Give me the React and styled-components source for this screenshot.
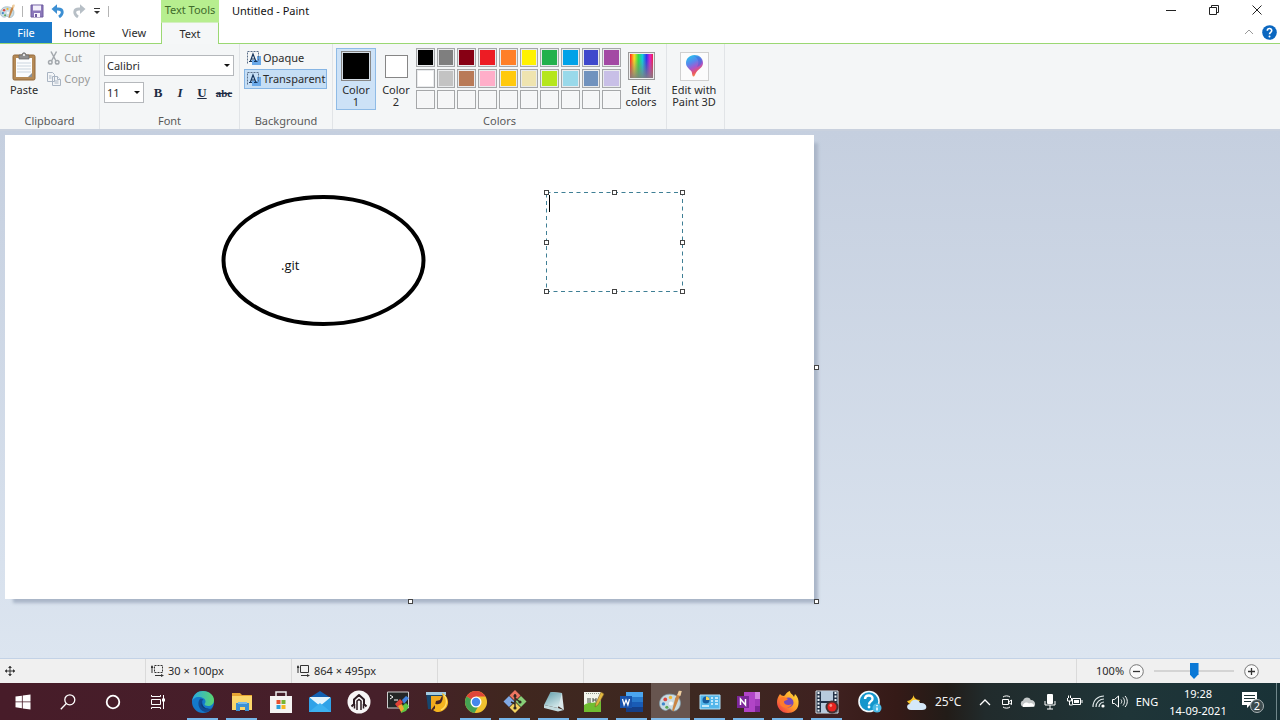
import React from "react";
import styled, { createGlobalStyle, css } from "styled-components";

const GlobalStyle = createGlobalStyle`
  *, *::before, *::after { box-sizing: border-box; }
  body {
    margin: 0;
    font-family: "Noto Sans", "Open Sans", sans-serif;
    font-size: 11px;
    line-height: 12px;
    color: #2b2b2b;
    background: #fff;
  }
  button, select, input, textarea { font: inherit; color: inherit; }
  svg { display: block; flex: none; }
`;

const Window = styled.div`
  display: flex;
  flex-direction: column;
  min-height: 100vh;
`;

const PlainButton = styled.button`
  display: flex;
  align-items: center;
  justify-content: center;
  padding: 0;
  border: 0;
  background: none;
`;

/* ---------- title bar and tabs ---------- */

const TitleBar = styled.header`
  display: flex;
  height: 22px;
  background: #fff;
`;

const QuickAccess = styled.div`
  display: flex;
  align-items: center;
  gap: 7px;
  width: 161px;
`;

const Divider = styled.span`
  width: 1px;
  height: 11px;
  background: #b4b4b4;
`;

const ContextTitle = styled.div`
  width: 58px;
  padding-top: 4px;
  text-align: center;
  white-space: nowrap;
  color: #3f6b2b;
  background: #b7ee8f;
`;

const Title = styled.h1`
  flex: 1;
  margin: 0;
  padding: 5px 0 0 13px;
  font-size: 11px;
  font-weight: 400;
  color: #111;
`;

const WindowButtons = styled.div`
  display: flex;
  padding-right: 2px;
`;

const WindowButton = styled(PlainButton)`
  width: 43px;
  height: 20px;
`;

const TabBar = styled.nav`
  display: flex;
  height: 22px;
  border-bottom: 1px solid #9bd873;
  background: #fff;
`;

const Tab = styled(PlainButton)`
  width: ${(p) => p.$width}px;
  height: 22px;
  ${(p) => p.$file && css`height: 21px; color: #fff; background: #1979ca;`}
  ${(p) => p.$active && css`
    border: 1px solid #9bd873;
    border-top-color: #d3efc0;
    border-bottom: 0;
    background: #f5f7f8;
  `}
`;

const TabTools = styled.div`
  display: flex;
  align-items: center;
  gap: 9px;
  margin-left: auto;
  padding-right: 3px;
`;

/* ---------- ribbon ---------- */

const Ribbon = styled.section`
  display: flex;
  height: 87px;
  border-bottom: 2px solid #c9d1de;
  background: #f4f6f7;
`;

const Group = styled.div`
  display: flex;
  flex-direction: column;
  width: ${(p) => p.$width}px;
  border-right: 1px solid #e1e4e7;
`;

const GroupBody = styled.div`
  display: flex;
  flex: 1;
  padding: ${(p) => p.$pad || "4px"};
`;

const GroupLabel = styled.div`
  height: 14px;
  text-align: center;
  color: #5a5a5a;
`;

const Column = styled.div`
  display: flex;
  flex-direction: column;
  gap: ${(p) => p.$gap}px;
`;

const Row = styled.div`
  display: flex;
  align-items: center;
  gap: 3px;
`;

const StyleButtons = styled.div`
  display: flex;
`;

const LargeButton = styled.button`
  display: flex;
  flex-direction: column;
  align-items: center;
  gap: 3px;
  width: ${(p) => p.$width || 40}px;
  height: 62px;
  padding: 2px 0 0;
  border: 1px solid ${(p) => (p.$pressed ? "#8fbbe6" : "transparent")};
  background: ${(p) => (p.$pressed ? "#cde2f7" : "none")};
  white-space: nowrap;
`;

const LargeIcon = styled.span`
  display: flex;
  align-items: center;
  justify-content: center;
  height: 30px;
`;

const SmallButton = styled.button`
  display: flex;
  align-items: center;
  gap: ${(p) => (p.$muted ? 3 : 1)}px;
  height: 20px;
  padding: 0 ${(p) => (p.$muted ? 3 : 1)}px;
  border: 1px solid ${(p) => (p.$pressed ? "#86b5e4" : "transparent")};
  background: ${(p) => (p.$pressed ? "#c5def5" : "none")};
  color: ${(p) => (p.$muted ? "#9a9a9a" : "#2b2b2b")};
`;

const SelectBox = styled.span`
  position: relative;
  display: block;
  width: ${(p) => p.$width}px;
  &::after {
    content: "";
    position: absolute;
    top: 9px;
    right: 4px;
    border: 3px solid transparent;
    border-top-color: #111;
    border-bottom: 0;
    pointer-events: none;
  }
`;

const Select = styled.select`
  display: block;
  width: 100%;
  height: 21px;
  padding: 0 2px;
  appearance: none;
  border: 1px solid #b5b8bc;
  border-radius: 0;
  background: #fff;
`;

const StyleButton = styled(PlainButton)`
  width: 22px;
  height: 21px;
  font: 700 13px/16px "Liberation Serif", serif;
  color: #1d2c44;
  ${(p) => p.$italic && css`font-style: italic;`}
  ${(p) => p.$underline && css`text-decoration: underline;`}
  ${(p) => p.$strike && css`font-size: 11px; text-decoration: line-through;`}
`;

const ColorWell = styled.span`
  display: block;
  width: ${(p) => p.$size}px;
  height: ${(p) => p.$size}px;
  border: 1px solid #868686;
  background: ${(p) => p.$color};
  ${(p) => p.$inset && css`box-shadow: inset 0 0 0 1px #d5dde5;`}
`;

const Palette = styled.div`
  display: grid;
  grid-template-columns: repeat(10, 1fr);
  grid-auto-rows: 19px;
  gap: 2px;
  width: 205px;
`;

const Swatch = styled.button`
  padding: 0;
  border: 1px solid #a5a7a9;
  background: ${(p) => p.$color || "#f5f6f7"};
  box-shadow: inset 0 0 0 1px ${(p) => (p.$color ? "#e9ebed" : "#f7f8f9")};
`;

/* ---------- workspace ---------- */

const Workspace = styled.main`
  flex: 1;
  padding: 4px 5px;
  background: linear-gradient(#c5cfdf, #dce5f0);
`;

const Canvas = styled.div`
  position: relative;
  width: 809px;
  height: 464px;
  background: #fff;
  box-shadow: 6px 6px 3px -2px #aab6c8;
`;

const Drawing = styled.svg`
  position: absolute;
  left: 215px;
  top: 58px;
`;

const CanvasText = styled.span`
  position: absolute;
  left: 276px;
  top: 122px;
  font: 13px/16px "Open Sans", sans-serif;
  color: #111;
`;

const TextFrame = styled.div`
  position: absolute;
  left: 541px;
  top: 57px;
  width: 136px;
  height: 99px;
`;

const FrameLines = styled.svg`
  position: absolute;
  left: 0;
  top: 0;
`;

const TextInput = styled.textarea`
  display: block;
  width: 100%;
  height: 100%;
  padding: 2px;
  border: 0;
  outline: 0;
  resize: none;
  background: transparent;
`;

const Caret = styled.span`
  position: absolute;
  left: 3px;
  top: 3px;
  width: 1px;
  height: 17px;
  background: #000;
`;

const Handle = styled.span`
  position: absolute;
  left: ${(p) => p.$x};
  top: ${(p) => p.$y};
  width: 5px;
  height: 5px;
  margin: -2px;
  border: 1px solid #444;
  background: #fff;
`;

/* ---------- status bar ---------- */

const StatusBar = styled.footer`
  display: flex;
  height: 25px;
  border-top: 1px solid #c3d2e6;
  background: #f0f0f0;
`;

const StatusCell = styled.div`
  display: flex;
  align-items: center;
  gap: 4px;
  width: 146px;
  padding-left: 5px;
  border-right: 1px solid #dadada;
`;

const ZoomTools = styled.div`
  display: flex;
  align-items: center;
  margin-left: auto;
  width: 204px;
  padding-left: 19px;
  gap: 5px;
  border-left: 1px solid #dadada;
`;

const ZoomButton = styled(PlainButton)`
  width: 15px;
  height: 15px;
`;

const ZoomSlider = styled.input`
  width: 80px;
  height: 16px;
  margin: 0 5px;
  appearance: none;
  background: linear-gradient(#d4d4d4, #d4d4d4) center / 100% 2px no-repeat;
  &::-webkit-slider-thumb {
    appearance: none;
    width: 9px;
    height: 16px;
    background: #0a78d6;
    clip-path: polygon(0 0, 100% 0, 100% 70%, 50% 100%, 0 70%);
  }
`;

/* ---------- taskbar ---------- */

const Taskbar = styled.nav`
  display: flex;
  height: 37px;
  color: #fff;
  background: linear-gradient(90deg, #471c29 0%, #46202a 30%, #40271f 40%, #3d2821 55%, #3f2120 65%, #351a17 70%, #221c18 74%, #212b2c 77%, #1f3538 88%, #193237 100%);
`;

const TaskButton = styled(PlainButton)`
  width: ${(p) => p.$width || 39}px;
  height: 37px;
  background: ${(p) => (p.$active ? "#67554f" : "none")};
  box-shadow: ${(p) => (p.$active ? "inset 0 -2px #82bbe9" : "none")};
  ${(p) => p.$open && css`
    background: linear-gradient(#76b5e8, #76b5e8) bottom / 31px 2px no-repeat;
  `}
`;

const Apps = styled.div`
  display: flex;
  padding-left: 3px;
`;

const Tray = styled.div`
  display: flex;
  align-items: center;
  margin-left: auto;
`;

const Weather = styled(PlainButton)`
  justify-content: flex-start;
  gap: 8px;
  width: 68px;
  font-size: 12px;
  color: #f2f2f2;
`;

const TrayButton = styled(PlainButton)`
  width: ${(p) => p.$width || 22}px;
  height: 37px;
  color: #fff;
`;

const Clock = styled.time`
  display: block;
  width: 72px;
  text-align: center;
  line-height: 17px;
`;

const Notifications = styled(PlainButton)`
  width: 43px;
  height: 37px;
  margin-right: 3px;
  padding-right: 4px;
  border-right: 1px solid #70868a;
`;

/* ---------- icons ---------- */

const PaintIcon = ({ size = 22 }) => (
  <svg width={size} height={size} viewBox="0 0 22 22">
    <path d="M10 4C4.500 4 .5 8 .5 13c0 4 3 6.500 6 6.500 2 0 2.200-1.500 3.500-1.500 1.600 0 1.500 2 4.500 2 3 0 6-3 6-7.500C20.500 7 16 4 10 4z" fill="#c9dbe2" stroke="#7f9dab" strokeWidth=".7" />
    <circle cx="6" cy="9" r="1.800" fill="#d9463f" />
    <circle cx="4.200" cy="13.300" r="1.600" fill="#3d85c9" />
    <circle cx="11" cy="7.200" r="1.600" fill="#f0b733" />
    <circle cx="7.500" cy="16.500" r="1.500" fill="#58a856" />
    <circle cx="11.500" cy="13" r="1.900" fill="#f8fafb" />
    <path d="M19 1.500 15.500 8l-3 11.500 1.600.8L18.500 9.500 21 2.500z" fill="#c98545" />
    <path d="M19 .8 17.500 4.800l3 1L21.800 1z" fill="#efcfa0" />
  </svg>
);

const SaveIcon = () => (
  <svg width="14" height="14" viewBox="0 0 14 14">
    <path d="M1 1h12v12H1z" fill="#8b78ba" stroke="#6f5c9f" />
    <path d="M3 1.500h8v5H3z" fill="#f3effa" />
    <path d="M4 9h6v4H4z" fill="#f7f4fc" />
    <path d="M5 10h2v3H5z" fill="#6f5c9f" />
  </svg>
);

const UndoIcon = ({ color, flip }) => (
  <svg width="14" height="14" viewBox="0 0 14 14">
    <g transform={flip ? "translate(14 0) scale(-1 1)" : undefined}>
      <path d="M3.500 5h3.500c5.500 0 5.500 5 1 8" fill="none" stroke={color} strokeWidth="2.800" />
      <path d="M6 .2.5 4.900l5.500 5z" fill={color} />
    </g>
  </svg>
);

const MenuCaret = () => (
  <svg width="8" height="8" viewBox="0 0 8 8">
    <path d="M1 1.500h6" stroke="#333" />
    <path d="M1 4h6L4 7z" fill="#333" />
  </svg>
);

const PasteIcon = () => (
  <svg width="24" height="29" viewBox="0 0 24 29">
    <rect x="1" y="3" width="22" height="25" rx="1.500" fill="#b58a56" stroke="#93693b" />
    <path d="M4 6h16v19H4z" fill="#fbfcfd" />
    <path d="M5 11h14M5 14h14M5 17h14M5 20h14" stroke="#cbd5df" />
    <path d="M16 25l4-4v4z" fill="#8a9199" />
    <path d="M7 3h3c0-3 4-3 4 0h3v4H7z" fill="#8f8f8f" stroke="#666" strokeWidth=".7" />
    <circle cx="12" cy="3" r="1" fill="#fff" />
  </svg>
);

const CutIcon = () => (
  <svg width="14" height="14" viewBox="0 0 14 14" fill="none" stroke="#a3a8ad" strokeWidth="1.500">
    <path d="M4 .5 9 10M9.500.5 4.500 10" />
    <circle cx="3.300" cy="11.300" r="1.800" />
    <circle cx="10.200" cy="11.300" r="1.800" />
  </svg>
);

const CopyIcon = () => (
  <svg width="14" height="14" viewBox="0 0 14 14" fill="#f4f6f8" stroke="#a9b4c2">
    <path d="M.5.500h5l2 2v7h-7zM5.500 4.500h5l3 3v6h-8z" />
    <path d="M10.500 4.500v3h3M2 4h2.500M2 6h2.500M7.500 9h4M7.500 11h4" />
  </svg>
);

const LetterIcon = () => (
  <svg width="16" height="14" viewBox="0 0 16 14">
    <path d="M6 9h5V5h4v9H6z" fill="#6aa9e9" />
    <path d="M1.500 12.500V.5h11v9" fill="none" stroke="#5b6f88" strokeDasharray="2 1" />
    <path d="M3 10.500h3M8 10.500h3.500M4.300 10.500 7 3l3 7.500M5.300 8h3.500" fill="none" stroke="#17365d" strokeWidth="1.200" />
  </svg>
);

const EditColorsIcon = () => (
  <svg width="27" height="28" viewBox="0 0 27 28">
    <defs>
      <linearGradient id="rainbow">
        <stop offset="0" stopColor="#f22" /><stop offset=".18" stopColor="#fd2" />
        <stop offset=".36" stopColor="#3d4" /><stop offset=".54" stopColor="#1cd" />
        <stop offset=".72" stopColor="#33e" /><stop offset=".87" stopColor="#d2c" />
        <stop offset="1" stopColor="#e24" />
      </linearGradient>
      <linearGradient id="fadeGray" x2="0" y2="1">
        <stop offset=".2" stopColor="#808080" stopOpacity="0" /><stop offset="1" stopColor="#808080" stopOpacity=".9" />
      </linearGradient>
    </defs>
    <rect x=".5" y=".5" width="26" height="27" fill="#eee" stroke="#999" />
    <rect x="2" y="2" width="23" height="24" fill="url(#rainbow)" />
    <rect x="2" y="2" width="23" height="24" fill="url(#fadeGray)" />
  </svg>
);

const Paint3DIcon = () => (
  <svg width="29" height="29" viewBox="0 0 29 29">
    <defs>
      <linearGradient id="drop" x1=".2" x2=".6" y2="1">
        <stop offset="0" stopColor="#22c6ee" /><stop offset=".35" stopColor="#5a86ec" />
        <stop offset=".6" stopColor="#ad55c9" /><stop offset=".8" stopColor="#e95568" />
        <stop offset="1" stopColor="#f8a13b" />
      </linearGradient>
    </defs>
    <rect x=".5" y=".5" width="28" height="28" fill="#fcfcfc" stroke="#d0d0d0" />
    <path d="M14.500 3C9.500 3 6 6.800 6 11c0 4 3.500 6 5.500 8.500.8 1.500.5 4 1.500 5 1.500.7 2-2 3.300-4.200C18 17.500 23 15.500 23 11c0-4.500-3.500-8-8.500-8z" fill="url(#drop)" />
    <path d="M14 4c4 2 6 6 3 11 5-2 7-6 2-10z" fill="#2c61d8" opacity=".4" />
  </svg>
);

const line = { fill: "none", stroke: "#222", strokeWidth: 1 };

const HelpIcon = () => (
  <svg width="15" height="15" viewBox="0 0 15 15">
    <circle cx="7.500" cy="7.500" r="7.300" fill="#0b67c0" />
    <path d="M5.300 5.700c.2-3 4.500-2.700 4.400 0 0 1.500-2.200 1.700-2.200 3.500" fill="none" stroke="#fff" strokeWidth="1.600" />
    <circle cx="7.500" cy="11.500" r="1" fill="#fff" />
  </svg>
);

const MoveIcon = () => (
  <svg width="10" height="10" viewBox="0 0 10 10">
    <path d="M5 0v10M0 5h10" stroke="#333" />
    <path d="M3 2l2-2 2 2zM3 8l2 2 2-2zM2 3 0 5l2 2zM8 3l2 2-2 2z" fill="#333" />
  </svg>
);

const SizeIcon = ({ dashed }) => (
  <svg width="13" height="12" viewBox="0 0 13 12">
    <path d="M3.500.5h8v7h-8z" fill="none" stroke="#333" strokeDasharray={dashed ? "2 1" : undefined} />
    <path d="M1 8V1M4 10.500h8" stroke="#333" />
    <path d="M-.5 3 1 0l1.500 3zM10 9l3 1.500-3 1.500z" fill="#333" />
  </svg>
);

const ZoomGlyph = ({ plus }) => (
  <svg width="15" height="15" viewBox="0 0 15 15">
    <circle cx="7.500" cy="7.500" r="6.800" fill="#fafafa" stroke="#777" />
    <path d={plus ? "M4 7.500h7M7.500 4v7" : "M4 7.500h7"} stroke="#333" strokeWidth="1.300" />
  </svg>
);

const Svg = ({ size = 24, children }) => (
  <svg width={size} height={size} viewBox="0 0 24 24">{children}</svg>
);

const systemButtons = [
  ["Start", <svg width="16" height="16" viewBox="0 0 16 16"><path d="M.5 2.600 6.900 1.700v5.800H.5zM7.700 1.600 15.500.5v7H7.700zM.5 8.300h6.400v5.900l-6.400-.9zM7.700 8.300h7.800v7.200l-7.800-1.100z" fill="#fff" /></svg>],
  ["Search", <svg width="16" height="16" viewBox="0 0 16 16" fill="none" stroke="#fff" strokeWidth="1.300"><circle cx="9.800" cy="5.800" r="5" /><path d="M6.300 9.500.8 15.200" /></svg>],
  ["Cortana", <svg width="16" height="16" viewBox="0 0 16 16"><circle cx="8" cy="8" r="6.300" fill="none" stroke="#fff" strokeWidth="1.800" /></svg>],
  ["Task View", <svg width="16" height="16" viewBox="0 0 16 16" fill="none" stroke="#fff"><path d="M1.500 5.500h9v5h-9zM1.500 1v1.500h9V1M1.500 15v-1.500h9V15M13.500 1v14" /><path d="M12 4.500h3v3h-3z" fill="#fff" stroke="none" /></svg>],
];

const apps = [
  { name: "Microsoft Edge", open: true, icon: (
    <Svg>
      <defs><linearGradient id="edgeTop"><stop stopColor="#29a9e4" /><stop offset="1" stopColor="#5bd66e" /></linearGradient></defs>
      <circle cx="12" cy="12" r="11" fill="#1479cb" />
      <path d="M1 12C2 4 7 1 12 1c6 0 11 4 11 9 0 4-3 6-6 6-2 0-3.500-.7-3.500-1.700 0-.8 1-1.300 1-2.800C14.500 8.500 11 7 8 7c-4 0-6.500 2-7 5z" fill="url(#edgeTop)" />
      <path d="M9.500 8.500C6 11 6.500 20 14 22c3.500 0 6-1.500 7.500-4-5 2.500-10.500-.5-10.500-5 0-2 .8-3.200 1.500-3.800z" fill="#124b93" />
      <path d="M11.200 12c-.5 3.800 3 7.200 7.500 6.700-3 .9-7.700-.2-8.500-3.700z" fill="#0d3b78" />
    </Svg>) },
  { name: "File Explorer", open: true, icon: (
    <Svg>
      <path d="M2 3h8l2 2h10v4H2z" fill="#e7a533" /><path d="M2 6h20v14H2z" fill="#fbd66b" />
      <path d="M6 13h13v8h-4v-4h-5v4H6z" fill="#3c91d4" /><path d="M8 12h9v2H8z" fill="#78bbeb" />
    </Svg>) },
  { name: "Microsoft Store", icon: (
    <Svg>
      <path d="M7 6V2h10v4" fill="none" stroke="#eee" strokeWidth="1.500" /><path d="M1 6h22v17H1z" fill="#f5f3f2" />
      <path d="M7.500 10h4v4h-4z" fill="#e8502e" /><path d="M12.500 10h4v4h-4z" fill="#78b532" />
      <path d="M7.500 15h4v4h-4z" fill="#2c9fda" /><path d="M12.500 15h4v4h-4z" fill="#f5b824" />
    </Svg>) },
  { name: "Mail", icon: (
    <Svg>
      <path d="M1 8 12 1l11 7v14H1z" fill="#1461b2" /><path d="M2 7h20v9H2z" fill="#e4f4fd" />
      <path d="m1 7 11 9 11-9v15H1z" fill="#2fa2e8" /><path d="m1 22 11-9 11 9z" fill="#3db1f0" />
    </Svg>) },
  { name: "Cloud client", icon: (
    <Svg>
      <circle cx="12" cy="12" r="11.500" fill="#f7f5f6" />
      <path d="M4.500 16.500 7 14V9.500L12 5l5 4.500V14l2.500 2.500" fill="none" stroke="#2c1b22" strokeWidth="2" strokeLinejoin="round" />
      <path d="M10 20v-9l2-1.500 2 1.500v9" fill="none" stroke="#2c1b22" strokeWidth="1.500" />
      <path d="M7.500 14v4.500M16.500 14v4.500" stroke="#2c1b22" strokeWidth="1.500" />
    </Svg>) },
  { name: "Terminal", icon: (
    <Svg>
      <path d="M1.500 2h21v16h-21z" fill="#242626" stroke="#ccc" /><path d="m4 5 3 2-3 2M8 10h4" fill="none" stroke="#fff" />
      <path d="m9 14 5-5 3 3-5 6z" fill="#e04137" /><path d="m16 10 4-4 3 2-5 6z" fill="#4180dc" />
      <path d="m15 17 5-4 3 3-3 5-5 2z" fill="#5cc643" /><path d="m12 16 4-2 2 5-3 3z" fill="#f3a52e" />
    </Svg>) },
  { name: "Script editor", icon: (
    <Svg>
      <path d="M1 2h20v4H7v13H3z" fill="#17476f" /><path d="M1 2h20v3H1z" fill="#a3cbe0" />
      <path d="M6 6h11l-2 4-4 1-1 4-4 5z" fill="#f0a91d" />
      <path d="M9 13c2 2 7 2 8-2 1-2 1-5 0-8 6 3 8 10 4 15-4 5-10 5-13 2 2-1 3-2 1-7z" fill="#f5b51f" />
      <path d="M19 5c4 5 3 12-3 15" fill="none" stroke="#ffe070" strokeWidth="1.300" />
    </Svg>) },
  { name: "Google Chrome", open: true, icon: (
    <Svg>
      <circle cx="12" cy="12" r="11" fill="#f1c22f" />
      <path d="M12 12 2.500 6.500A11 11 0 0 1 21.500 6.500H12z" fill="#df4639" />
      <path d="M2.500 6.500a11 11 0 0 0 8 16.400l4.700-8.200L12 12z" fill="#45a253" />
      <circle cx="12" cy="12" r="5.500" fill="#fff" /><circle cx="12" cy="12" r="4.200" fill="#4688ed" />
    </Svg>) },
  { name: "Git Bash", open: true, icon: (
    <Svg>
      <path d="m12 0 5.500 5.500L12 11 6.500 5.500z" fill="#ed7560" /><path d="m6 6 5.500 5.500L6 17 .5 11.500z" fill="#80a9e5" />
      <path d="m18 6 5.500 5.500L18 17l-5.500-5.500z" fill="#88cf78" /><path d="m12 12 5.500 5.500L12 23l-5.500-5.500z" fill="#f2d360" />
      <path d="M12 4v15M12 8l5 4M12 14l-4-2" stroke="#302820" strokeWidth="1.400" fill="none" />
      <circle cx="12" cy="6" r="1.600" fill="#302820" /><circle cx="17" cy="12" r="1.600" fill="#302820" /><circle cx="12" cy="18" r="1.600" fill="#302820" />
    </Svg>) },
  { name: "Notepad", open: true, icon: (
    <Svg>
      <defs><linearGradient id="page" x2=".6" y2="1"><stop stopColor="#5d9aa6" /><stop offset="1" stopColor="#d3e8ea" /></linearGradient></defs>
      <path d="m9 2 11 1 2 17-6-4z" fill="#dbe8ea" />
      <path d="M8.500 2 20 3l-4 15-14-3z" fill="url(#page)" />
      <path d="m2 15 14 3 6 2-6 1.500L2 18z" fill="#c3dbde" />
    </Svg>) },
  { name: "Notepad++", open: true, icon: (
    <Svg>
      <path d="M3 2h17v20H3z" fill="#f3f5ec" /><path d="M3 15c6-4 11-1 17-4v11H3z" fill="#70bd31" />
      <path d="M5 3.500h13" stroke="#8d968a" strokeDasharray="1 1" />
      <path d="M7 8v5M9 8v5M12 8v4M15 8v4M12 10h3" stroke="#454d42" />
      <path d="m20 2 3 2-6 11-3 2 1-4z" fill="#e3b73f" stroke="#7c622a" strokeWidth=".6" />
    </Svg>) },
  { name: "Word", open: true, icon: (
    <Svg>
      <path d="M6 2h17v20H6z" fill="#2878ca" /><path d="M6 2h17v5H6z" fill="#4ba5ee" /><path d="M6 12h17v5H6z" fill="#195bb5" /><path d="M6 17h17v5H6z" fill="#153f87" />
      <path d="M0 6h12v12H0z" fill="#1852aa" /><path d="m2.500 9 1.600 6L6 10l1.900 5 1.600-6" fill="none" stroke="#fff" strokeWidth="1.300" />
    </Svg>) },
  { name: "Paint", active: true, icon: <PaintIcon size={23} /> },
  { name: "Contact card", open: true, icon: (
    <Svg>
      <path d="M2 5h20v14H2z" fill="#54b6ea" stroke="#b4e2fa" /><circle cx="8" cy="10" r="3.500" fill="#175c9e" /><path d="M8 6.500A3.500 3.500 0 0 1 11.500 10H8z" fill="#f4d45f" />
      <path d="M13 8h2M17 8h3M13 11h2M17 11h3M13 14h2M17 14h3M4 16h7" stroke="#e7f7ff" strokeWidth="1.500" />
    </Svg>) },
  { name: "OneNote", open: true, icon: (
    <Svg>
      <path d="M7 2h16v20H7z" fill="#b145c7" /><path d="M18 2h5v7h-5z" fill="#d385e1" /><path d="M18 9h5v7h-5z" fill="#a23bbb" /><path d="M18 16h5v6h-5z" fill="#7c2699" />
      <path d="M0 6h12v12H0z" fill="#7c2699" /><path d="M3.500 15V9l5 6V9" fill="none" stroke="#fff" strokeWidth="1.500" />
    </Svg>) },
  { name: "Firefox", open: true, icon: (
    <Svg>
      <defs><linearGradient id="fox" x1="1" x2="0" y2="1"><stop stopColor="#ffe63d" /><stop offset=".5" stopColor="#ff9b29" /><stop offset="1" stopColor="#ee244c" /></linearGradient></defs>
      <path d="M4 4c1 1 2 2 4 2 1 0 2-4 6-5 0 3 3 3 4 6l1-3c3 3 4 6 3.500 10C22 20 17 23 12 23 5 23 1 18 1 12c0-3 1-5 3-8z" fill="url(#fox)" />
      <circle cx="12.500" cy="12.500" r="5" fill="#7549bd" />
      <path d="M4 8c3-2 5-1 8 1-1 2-4 1-4 3 0 3 5 4 8 2-2 5-10 5-12 0z" fill="#ff7b2c" />
    </Svg>) },
  { name: "Screen Recorder", open: true, icon: (
    <Svg>
      <path d="M1 1h22v22H1z" fill="#233247" stroke="#dbe5ec" /><path d="M6 1h12v10H6zM6 13h12v10H6z" fill="#b8cbdd" />
      <path d="M3.500 2v21M20.500 2v21" stroke="#f0f5fa" strokeWidth="2" strokeDasharray="2 1.500" />
      <circle cx="17" cy="17" r="6.500" fill="#443132" /><circle cx="17" cy="17" r="4.500" fill="#e7231f" /><circle cx="15.800" cy="15.500" r="1.400" fill="#ff8f80" />
    </Svg>) },
  { name: "Help", wide: true, icon: (
    <Svg>
      <circle cx="11" cy="11.500" r="10" fill="#1496cc" stroke="#f3fafd" strokeWidth="1.600" />
      <path d="M7 9c.2-5 8-4.500 7.500 0-.2 2.500-3.500 2.500-3.500 5.500" fill="none" stroke="#fff" strokeWidth="2.400" />
      <circle cx="11" cy="17" r="1.400" fill="#fff" /><circle cx="19" cy="18" r="4.500" fill="#49b9e5" /><path d="M19 17.500v3M19 15v1.300" stroke="#fff" strokeWidth="1.500" />
    </Svg>) },
];

const tray = [
  { name: "Show hidden icons", icon: <svg width="12" height="12" viewBox="0 0 12 12" fill="none" stroke="#fff" strokeWidth="1.300"><path d="m1 9 5-5 5 5" /></svg> },
  { name: "Meet Now", icon: <svg width="14" height="14" viewBox="0 0 14 14" fill="none" stroke="#fff"><path d="M2.500 4.500h6v5h-6zM8.500 7l3-2v4.500l-3-2M3 2c2-1.500 5-1.500 7 0M3 12c2 1.500 5 1.500 7 0" /></svg> },
  { name: "OneDrive", width: 20, icon: <svg width="16" height="12" viewBox="0 0 16 12"><path d="M3.500 11a3.300 3.300 0 0 1-.4-6.400C4 1 9 .3 10.800 4c3.800-.2 5.800 4.500 3 6.600-.8.500-7.300.4-10.300.4z" fill="#c4c8c9" /><path d="M3 11C2 8 6 5 9 7.500c2-1.500 5 0 5.500 3z" fill="#fff" /></svg> },
  { name: "Microphone", width: 24, icon: <svg width="12" height="17" viewBox="0 0 12 17"><rect x="3" y="1" width="6" height="10" rx="1" fill="#fff" /><path d="M1 8v4h10V8M6 12v4M3 16h6" fill="none" stroke="#fff" /></svg> },
  { name: "Battery", width: 26, icon: <svg width="16" height="13" viewBox="0 0 16 13" fill="none" stroke="#fff"><path d="M5.500 3.500h8v6h-8zM15 5v3M.5 3v3h4V3M1.500 3V.5M3.500 3V.5M2.500 6v4h3" /><path d="M7 5h5v3H7z" fill="#fff" stroke="none" /></svg> },
  { name: "Wi-Fi", width: 20, icon: <svg width="13" height="13" viewBox="0 0 13 13" fill="none" stroke="#dfe7e8" strokeWidth="1.200"><path d="M1 12C1 5 6 1 12 1M4 12c0-5 4-8 8-8M7 12c0-3 2.500-5 5-5" /><circle cx="11" cy="11" r="1.600" fill="#fff" stroke="none" /></svg> },
  { name: "Volume", width: 24, icon: <svg width="16" height="13" viewBox="0 0 16 13" fill="none" stroke="#fff"><path d="M.5 4.500h2l4-3.500v11l-4-3.500h-2zM9 4.500c1 1.500 1 2.500 0 4M11 2.500c2 2.500 2 5.500 0 8M13 1c3 3 3 8 0 11" /></svg> },
];

const palette = [
  "#000000", "#7f7f7f", "#870014", "#ed1c24", "#ff7f27", "#fff200", "#22b14c", "#00a2e8", "#3f48cc", "#a349a4",
  "#ffffff", "#c3c3c3", "#b97a57", "#ffaec9", "#ffc90e", "#efe4b0", "#b5e61d", "#99d9ea", "#7092be", "#c8bfe7",
  ...Array(10).fill(null),
];

const stops = ["0%", "50%", "100%"];
const frameHandles = stops.flatMap((x) => stops.map((y) => [x, y])).filter(([x, y]) => x !== "50%" || y !== "50%");

export default function App() {
  return (
    <Window>
      <GlobalStyle />
      <TitleBar>
        <QuickAccess>
          <PaintIcon size={15} />
          <Divider />
          <PlainButton aria-label="Save"><SaveIcon /></PlainButton>
          <PlainButton aria-label="Undo"><UndoIcon color="#3c8fd3" /></PlainButton>
          <PlainButton aria-label="Redo"><UndoIcon color="#b7bfc6" flip /></PlainButton>
          <PlainButton aria-label="Customize toolbar"><MenuCaret /></PlainButton>
          <Divider />
        </QuickAccess>
        <ContextTitle>Text Tools</ContextTitle>
        <Title>Untitled - Paint</Title>
        <WindowButtons>
          <WindowButton aria-label="Minimize"><svg width="10" height="10" viewBox="0 0 10 10" {...line}><path d="M0 5.500h10" /></svg></WindowButton>
          <WindowButton aria-label="Restore"><svg width="10" height="10" viewBox="0 0 10 10" {...line}><path d="M.5 2.500h7v7h-7zM2.500 2.500v-2h7v7h-2" /></svg></WindowButton>
          <WindowButton aria-label="Close"><svg width="10" height="10" viewBox="0 0 10 10" {...line}><path d="m.5.500 9 9M9.500.5l-9 9" /></svg></WindowButton>
        </WindowButtons>
      </TitleBar>
      <TabBar>
        <Tab $width={52} $file>File</Tab>
        <Tab $width={55}>Home</Tab>
        <Tab $width={54}>View</Tab>
        <Tab $width={58} $active>Text</Tab>
        <TabTools>
          <PlainButton aria-label="Collapse ribbon"><svg width="8" height="8" viewBox="0 0 8 8" fill="none" stroke="#999"><path d="m0 5 4-4 4 4" /></svg></PlainButton>
          <PlainButton aria-label="Help"><HelpIcon /></PlainButton>
        </TabTools>
      </TabBar>

      <Ribbon>
        <Group $width={100}>
          <GroupBody $pad="4px 5px">
            <LargeButton>
              <LargeIcon><PasteIcon /></LargeIcon>
              Paste
            </LargeButton>
            <Column $gap={1}>
              <SmallButton $muted><CutIcon />Cut</SmallButton>
              <SmallButton $muted><CopyIcon />Copy</SmallButton>
            </Column>
          </GroupBody>
          <GroupLabel>Clipboard</GroupLabel>
        </Group>
        <Group $width={140}>
          <GroupBody $pad="11px 4px 0">
            <Column $gap={6}>
              <SelectBox $width={130}>
                <Select aria-label="Font family"><option>Calibri</option></Select>
              </SelectBox>
              <Row>
                <SelectBox $width={40}>
                  <Select aria-label="Font size"><option>11</option></Select>
                </SelectBox>
                <StyleButtons>
                  <StyleButton aria-label="Bold">B</StyleButton>
                  <StyleButton aria-label="Italic" $italic>I</StyleButton>
                  <StyleButton aria-label="Underline" $underline>U</StyleButton>
                  <StyleButton aria-label="Strikethrough" $strike>abc</StyleButton>
                </StyleButtons>
              </Row>
            </Column>
          </GroupBody>
          <GroupLabel>Font</GroupLabel>
        </Group>
        <Group $width={93}>
          <GroupBody>
            <Column $gap={1}>
              <SmallButton><LetterIcon />Opaque</SmallButton>
              <SmallButton $pressed><LetterIcon />Transparent</SmallButton>
            </Column>
          </GroupBody>
          <GroupLabel>Background</GroupLabel>
        </Group>
        <Group $width={334}>
          <GroupBody $pad="4px 3px">
            <LargeButton $pressed>
              <LargeIcon><ColorWell $size={30} $color="#000" $inset /></LargeIcon>
              <span>Color<br />1</span>
            </LargeButton>
            <LargeButton>
              <LargeIcon><ColorWell $size={23} $color="#fff" /></LargeIcon>
              <span>Color<br />2</span>
            </LargeButton>
            <Palette>
              {palette.map((color, i) => (
                <Swatch key={i} $color={color} aria-label={color ? `Color ${color}` : "Empty color"} />
              ))}
            </Palette>
            <LargeButton>
              <LargeIcon><EditColorsIcon /></LargeIcon>
              <span>Edit<br />colors</span>
            </LargeButton>
          </GroupBody>
          <GroupLabel>Colors</GroupLabel>
        </Group>
        <Group $width={58}>
          <GroupBody $pad="4px 1px">
            <LargeButton $width={52}>
              <LargeIcon><Paint3DIcon /></LargeIcon>
              <span>Edit with<br />Paint 3D</span>
            </LargeButton>
          </GroupBody>
        </Group>
      </Ribbon>

      <Workspace>
        <Canvas>
          <Drawing width="210" height="136" viewBox="0 0 210 136">
            <ellipse cx="103.500" cy="67.500" rx="100" ry="63.500" fill="none" stroke="#000" strokeWidth="4" />
          </Drawing>
          <CanvasText>.git</CanvasText>
          <TextFrame>
            <FrameLines width="137" height="100" viewBox="0 0 137 100">
              <rect x=".5" y=".5" width="136" height="99" fill="none" stroke="#3f7f95" strokeDasharray="4 3.500" />
            </FrameLines>
            <TextInput aria-label="Canvas text" />
            <Caret />
            {frameHandles.map(([x, y]) => <Handle key={x + y} $x={x} $y={y} />)}
          </TextFrame>
          <Handle $x="calc(100% + 2px)" $y="50%" />
          <Handle $x="50%" $y="calc(100% + 2px)" />
          <Handle $x="calc(100% + 2px)" $y="calc(100% + 2px)" />
        </Canvas>
      </Workspace>

      <StatusBar>
        <StatusCell><MoveIcon /></StatusCell>
        <StatusCell><SizeIcon dashed />30 × 100px</StatusCell>
        <StatusCell><SizeIcon />864 × 495px</StatusCell>
        <StatusCell />
        <ZoomTools>
          <label htmlFor="zoom">100%</label>
          <ZoomButton aria-label="Zoom out"><ZoomGlyph /></ZoomButton>
          <ZoomSlider id="zoom" type="range" min="0" max="100" defaultValue="50" />
          <ZoomButton aria-label="Zoom in"><ZoomGlyph plus /></ZoomButton>
        </ZoomTools>
      </StatusBar>

      <Taskbar>
        {systemButtons.map(([name, icon]) => <TaskButton key={name} aria-label={name} $width={45}>{icon}</TaskButton>)}
        <Apps>
          {apps.map((app) => (
            <TaskButton key={app.name} aria-label={app.name} $open={app.open} $active={app.active} $width={app.wide ? 47 : 39}>
              {app.icon}
            </TaskButton>
          ))}
        </Apps>
        <Tray>
          <Weather>
            <svg width="21" height="18" viewBox="0 0 21 18">
              <path d="M8 0c-1 4 1 7 6 7-2 6-11 6-13 1 4 0 7-4 7-8z" fill="#fbc62c" />
              <path d="M5 17c-5 0-5-6-1-6 1-5 8-6 10-1 7-1 9 7 2 7z" fill="#d5e8f9" />
            </svg>
            25°C
          </Weather>
          {tray.map((t) => <TrayButton key={t.name} aria-label={t.name} $width={t.width}>{t.icon}</TrayButton>)}
          <TrayButton $width={30}>ENG</TrayButton>
          <Clock>19:28<br />14-09-2021</Clock>
          <Notifications aria-label="2 notifications">
            <svg width="24" height="24" viewBox="0 0 24 24">
              <path d="M1 2h15v13H9l-3 3v-3H1z" fill="#fff" /><path d="M3 5.500h11M3 8.500h11M3 11.500h7" stroke="#1f3538" />
              <circle cx="16" cy="16" r="6.500" fill="#3c4b4e" stroke="#aab4b6" />
              <text x="16" y="20" textAnchor="middle" fontSize="11" fill="#fff">2</text>
            </svg>
          </Notifications>
        </Tray>
      </Taskbar>
    </Window>
  );
}
